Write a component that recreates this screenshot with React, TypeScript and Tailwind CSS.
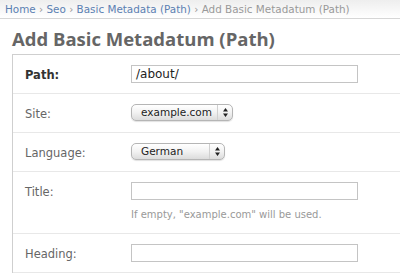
import React from "react";

function Sel({ value, width }: { value: string; width: string }) {
    return (
        <div
            className={`flex h-[17px] items-stretch rounded-[5px] border border-[#b5b5b5] bg-gradient-to-b from-white via-[#f2f2f2] to-[#dcdcdc] text-[10.5px] text-[#222] shadow-[0_1px_1px_rgba(0,0,0,0.12)] ${width}`}
        >
            <span className="flex flex-1 items-center pl-[9px] leading-none">{value}</span>
            <span className="flex w-[15px] flex-col items-center justify-center border-l border-[#d0d0d0] leading-none">
                <svg width="5" height="9" viewBox="0 0 5 9">
                    <path d="M2.5 0 L5 3.5 L0 3.5 Z M0 5.5 L5 5.5 L2.5 9 Z" fill="#222" />
                </svg>
            </span>
        </div>
    );
}

function Row({
    label,
    bold,
    children,
    tall,
}: {
    label: string;
    bold?: boolean;
    children: React.ReactNode;
    tall?: boolean;
}) {
    return (
        <div className={`flex border-b border-[#e8e8e8] ${tall ? "h-[62px]" : "h-[39px]"}`}>
            <div
                className={`w-[118px] shrink-0 pl-[12px] pt-[12px] text-[11.5px] ${
                    bold ? "font-bold text-[#333]" : "text-[#666]"
                }`}
            >
                {label}
            </div>
            <div className="pt-[10px]">{children}</div>
        </div>
    );
}

function TextBox({ value = "" }: { value?: string }) {
    return (
        <div className="flex h-[18px] w-[227px] items-center border border-[#c4c4c4] bg-white px-[4px] text-[12px] text-[#222]">
            {value}
        </div>
    );
}

export default function App() {
    return (
        <div
            className="h-[280px] w-[400px] overflow-hidden bg-white"
            style={{ fontFamily: '"DejaVu Sans", sans-serif' }}
        >
            {/* breadcrumbs */}
            <div className="h-[19px] border-b border-[#d6d6d6] bg-gradient-to-b from-[#eeeeee] to-white pl-[5px] pt-[3px] text-[10.4px] leading-[12px] text-[#999]">
                <span className="text-[#5b80b2]">Home</span> ›{" "}
                <span className="text-[#5b80b2]">Seo</span> ›{" "}
                <span className="text-[#5b80b2]">Basic Metadata (Path)</span> › Add Basic
                Metadatum (Path)
            </div>
            <h1
                className="pl-[12px] pt-[7px] pb-[1px] text-[18.5px] font-bold leading-[26px] text-[#666]"
                style={{ fontFamily: '"Open Sans", sans-serif' }}
            >
                Add Basic Metadatum (Path)
            </h1>
            {/* form */}
            <div className="ml-[12px] mt-[1px] w-[420px] border-l border-t border-[#cfcfcf]">
                <Row label="Path:" bold>
                    <TextBox value="/about/" />
                </Row>
                <Row label="Site:">
                    <Sel value="example.com" width="w-[102px]" />
                </Row>
                <Row label="Language:">
                    <Sel value="German" width="w-[94px]" />
                </Row>
                <Row label="Title:" tall>
                    <TextBox />
                    <p className="pt-[7px] text-[10px] text-[#999]">
                        If empty, "example.com" will be used.
                    </p>
                </Row>
                <Row label="Heading:">
                    <TextBox />
                </Row>
            </div>
        </div>
    );
}
